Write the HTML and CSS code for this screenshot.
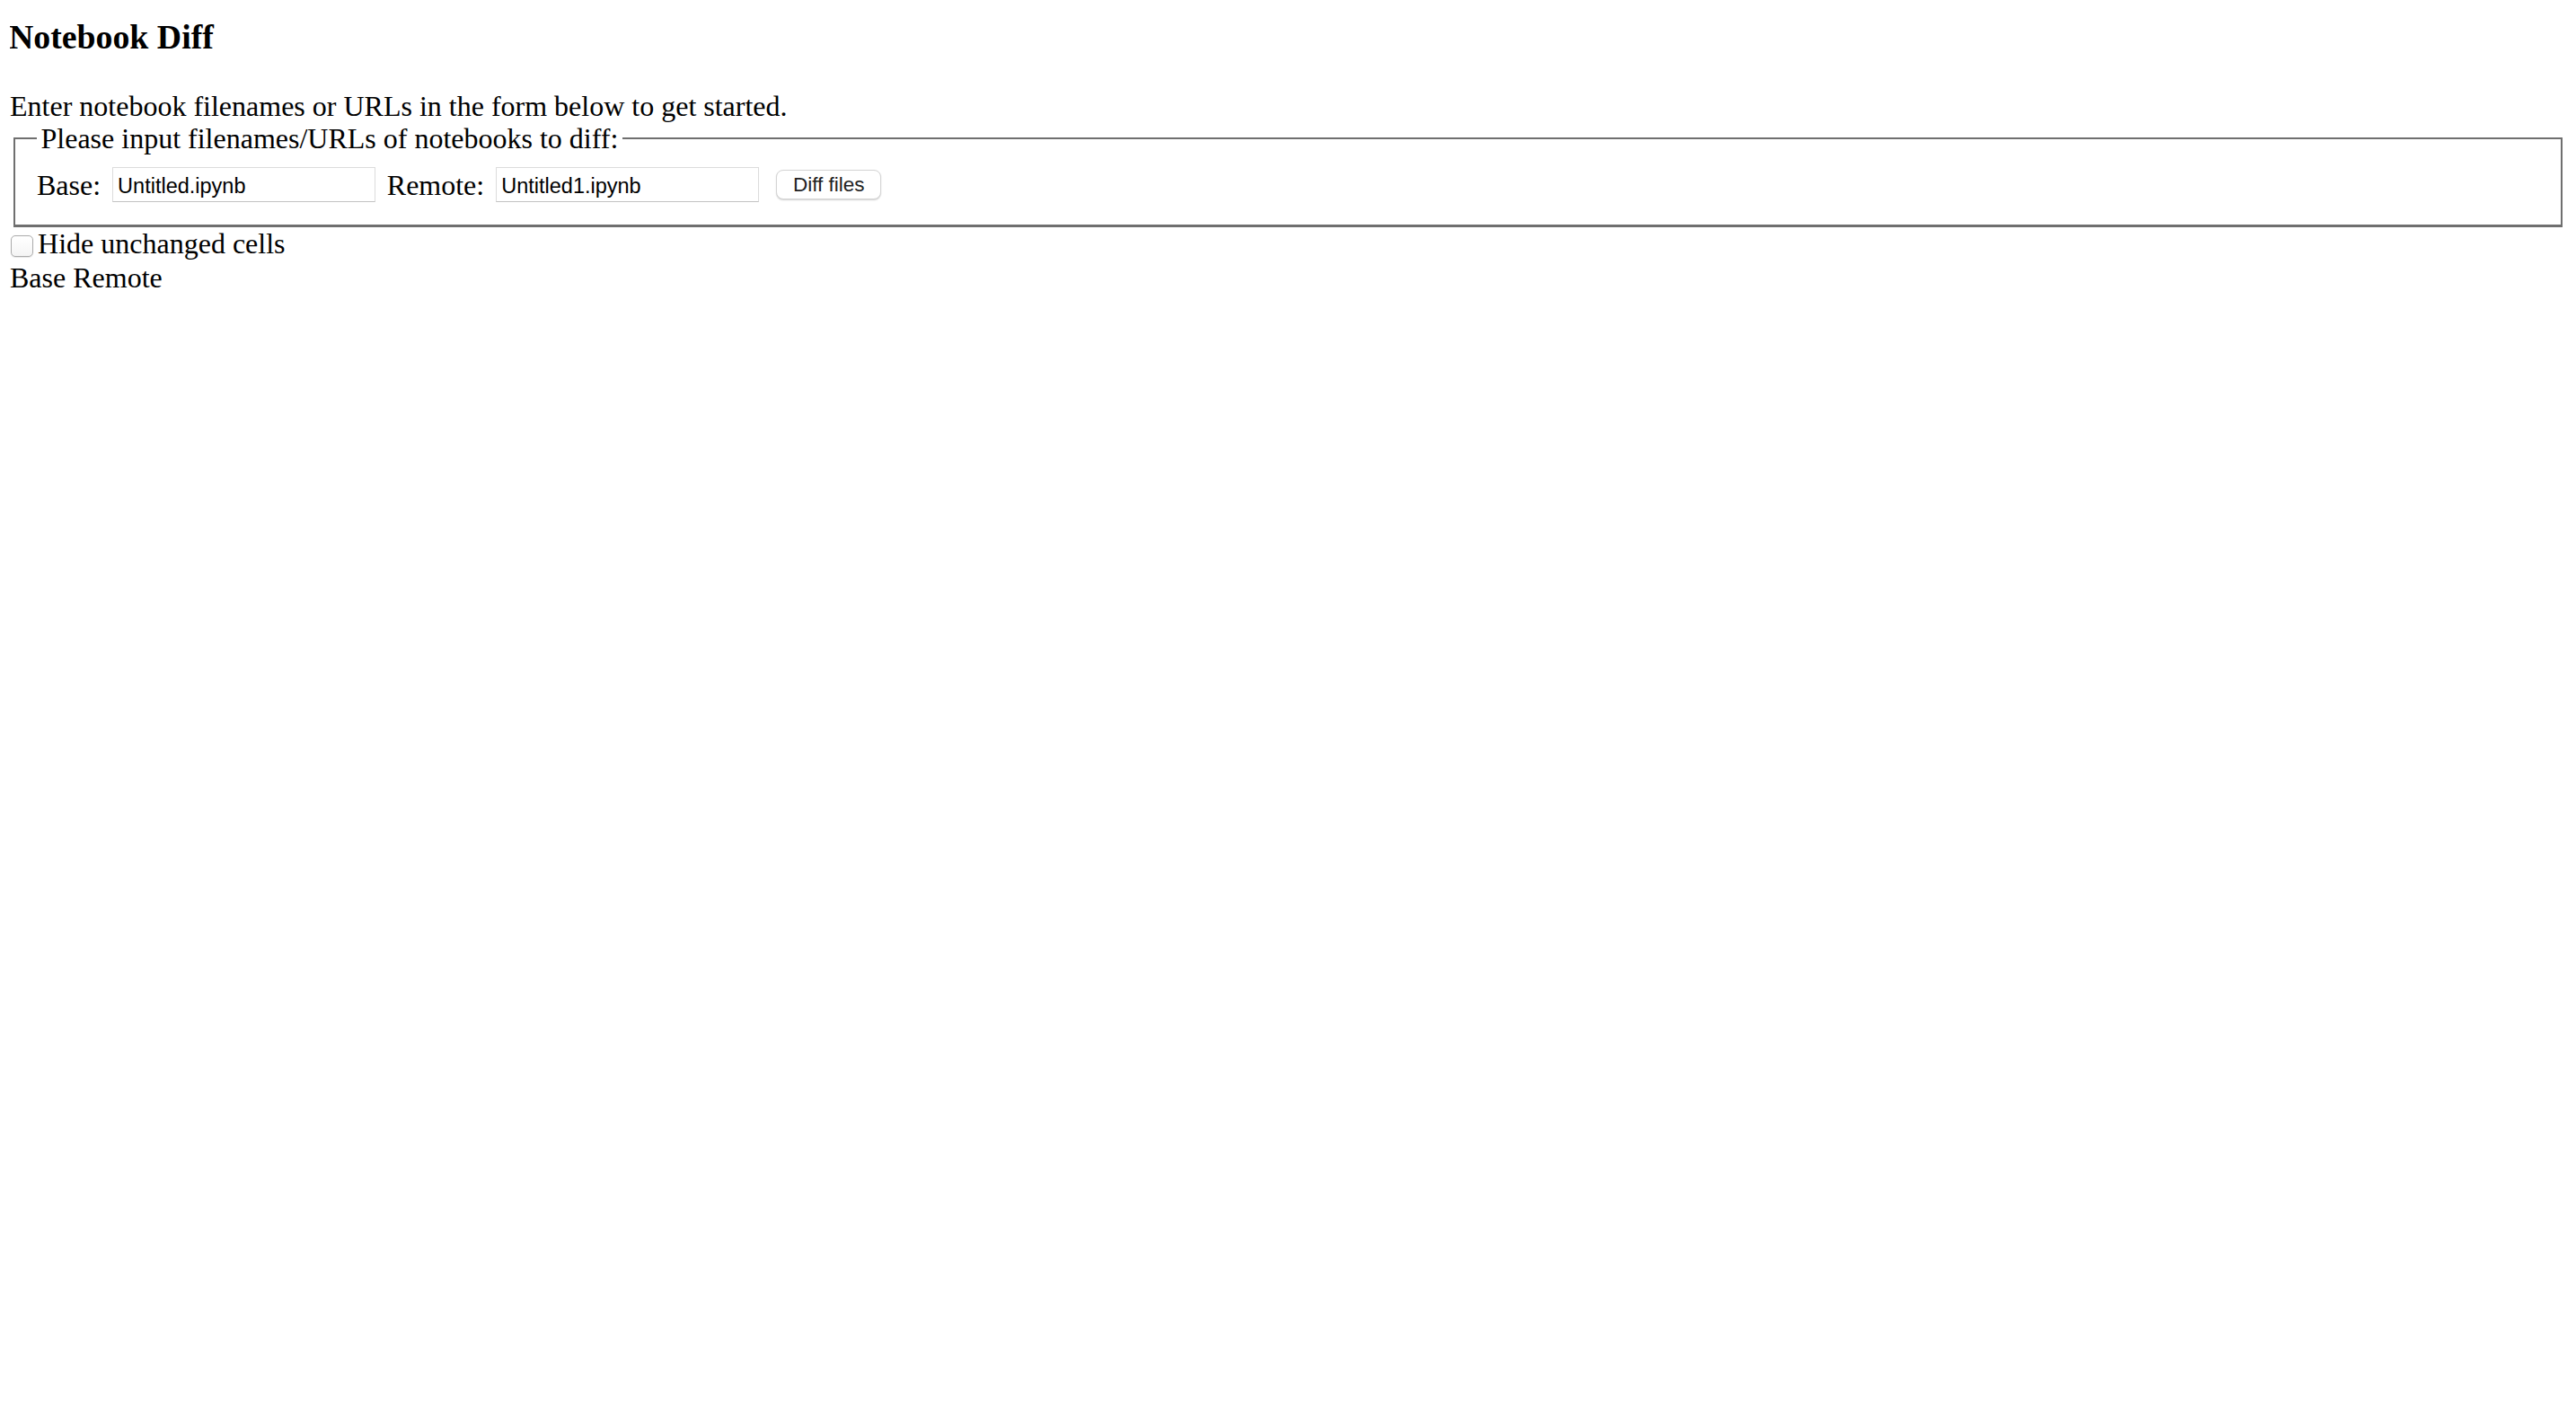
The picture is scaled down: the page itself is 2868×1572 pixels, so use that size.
FILE: index.html
```html
<!DOCTYPE html>
<html lang="en">
<head>
<meta charset="utf-8">
<title>Notebook Diff</title>
<link rel="stylesheet" href="styles.css">
</head>
<body class="page">
  <h3 class="title">Notebook Diff</h3>
  <div class="intro">Enter notebook filenames or URLs in the form below to get started.</div>
  <form class="diff-form">
    <fieldset class="form-box">
      <legend class="form-legend">Please input filenames/URLs of notebooks to diff:</legend>
      <div class="row">
        <span class="label">Base:</span>
        <input class="field" type="text" value="Untitled.ipynb">
        <span class="label">Remote:</span>
        <input class="field field-last" type="text" value="Untitled1.ipynb">
        <button class="btn" type="button">Diff files</button>
      </div>
    </fieldset>
  </form>
  <div class="toggle">
    <input class="check" type="checkbox">
    <span class="toggle-text">Hide unchanged cells</span>
  </div>
  <div class="columns">Base Remote</div>
</body>
</html>
```
FILE: styles.css
```css
html {
  background: #ffffff;
}

.page {
  margin: 0 11px 0 11px;
  font-family: "Liberation Serif", "Times New Roman", serif;
  font-size: 32px;
  line-height: 36px;
  color: #000000;
  background: #ffffff;
}

.title {
  margin: 18.6px 0 37.5px -1px;
  font-size: 37.8px;
  line-height: 44px;
  font-weight: bold;
}

.intro {
  margin: 0;
}

.diff-form {
  margin: 0;
}

.form-box {
  margin: -0.5px 4.5px 0 3.5px;
  padding: 14.4px 0 24.5px 24.5px;
  border: 2px solid #6f6f6f;
  border-bottom-width: 3px;
  min-width: 0;
}

.form-legend {
  padding: 0 4.5px;
  line-height: 36px;
}

.row {
  display: flex;
  align-items: center;
}

.label {
  margin-right: 13px;
  line-height: 36px;
}

.field {
  box-sizing: border-box;
  width: 293px;
  height: 39.3px;
  margin: 0 12.7px 0 0;
  padding: 4px 5px 0;
  border: 1.5px solid #dcdcdc;
  border-bottom-color: #c2c2c2;
  border-radius: 0;
  background: #ffffff;
  font-family: "Liberation Sans", Arial, sans-serif;
  font-size: 23.5px;
  color: #000000;
  outline: none;
}

.field-last {
  margin-right: 19px;
}

.btn {
  box-sizing: border-box;
  width: 117px;
  height: 32.5px;
  margin: 0;
  padding: 0;
  border: 1px solid #d4d4d4;
  border-radius: 8px;
  background: #ffffff;
  box-shadow: 0 1px 1.5px rgba(0, 0, 0, 0.18);
  font-family: "Liberation Sans", Arial, sans-serif;
  font-size: 22.5px;
  color: #222222;
}

.toggle {
  display: flex;
  align-items: flex-start;
}

.check {
  appearance: none;
  -webkit-appearance: none;
  box-sizing: border-box;
  width: 25px;
  height: 24px;
  margin: 9.5px 4.8px 4.5px 1.3px;
  border: 1.5px solid #ababab;
  border-radius: 5px;
  background: linear-gradient(#ffffff, #f4f4f4);
  box-shadow: 0 0.5px 1px rgba(0, 0, 0, 0.1);
  flex: none;
}

.toggle-text {
  line-height: 37px;
}

.columns {
  line-height: 36px;
}
```
